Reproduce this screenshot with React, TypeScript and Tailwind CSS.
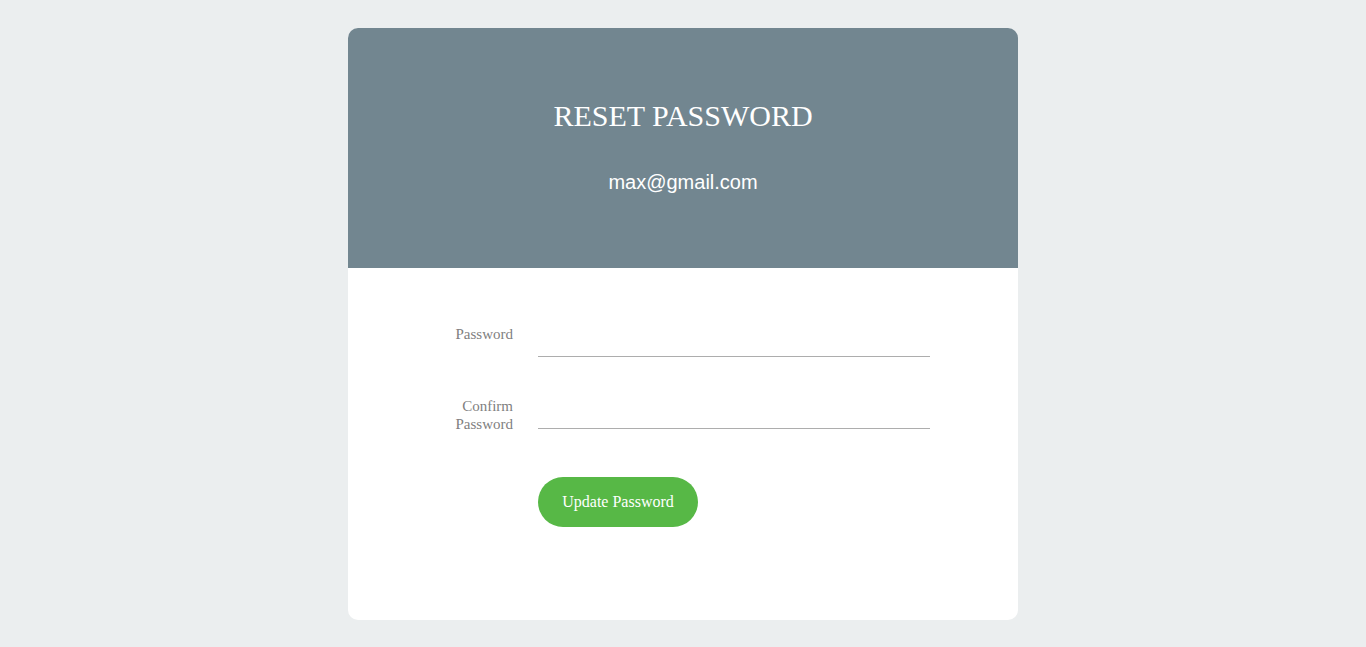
import React from "react";

export default function App() {
  return (
    <div className="min-h-[647px] w-full bg-[#ebeeef] flex justify-center pt-[28px] pb-[27px]" style={{ fontFamily: '"Liberation Serif", serif' }}>
      <div className="w-[670px] bg-white rounded-[10px] overflow-hidden flex flex-col">
        <div className="h-[240px] bg-[#728690] flex flex-col items-center pt-[70px]">
          <h1 className="text-[30px] leading-[36px] text-white" style={{ fontFamily: '"Liberation Serif", serif' }}>RESET PASSWORD</h1>
          <p className="mt-[34px] text-[20px] leading-[28px] text-white" style={{ fontFamily: '"Liberation Sans", Arial, sans-serif' }}>max@gmail.com</p>
        </div>
        <div className="flex flex-col pl-[90px] pr-[88px] pt-[49px] pb-[93px]">
          <div className="flex items-start h-[40px]">
            <label className="w-[100px] pr-[25px] pt-[8px] text-right text-[15px] leading-[18px] text-[#808080]">Password</label>
            <input type="password" className="flex-1 h-[40px] border-b border-[#adadad] outline-none bg-transparent" />
          </div>
          <div className="flex items-start h-[40px] mt-[32px]">
            <label className="w-[100px] pr-[25px] pt-[8px] text-right text-[15px] leading-[18px] text-[#808080]">Confirm<br />Password</label>
            <input type="password" className="flex-1 h-[40px] border-b border-[#adadad] outline-none bg-transparent" />
          </div>
          <div className="flex mt-[48px] pl-[100px]">
            <button className="w-[160px] h-[50px] rounded-full bg-[#57b846] text-white text-[16px]" style={{ fontFamily: '"Liberation Serif", serif' }}>Update Password</button>
          </div>
        </div>
      </div>
    </div>
  );
}
